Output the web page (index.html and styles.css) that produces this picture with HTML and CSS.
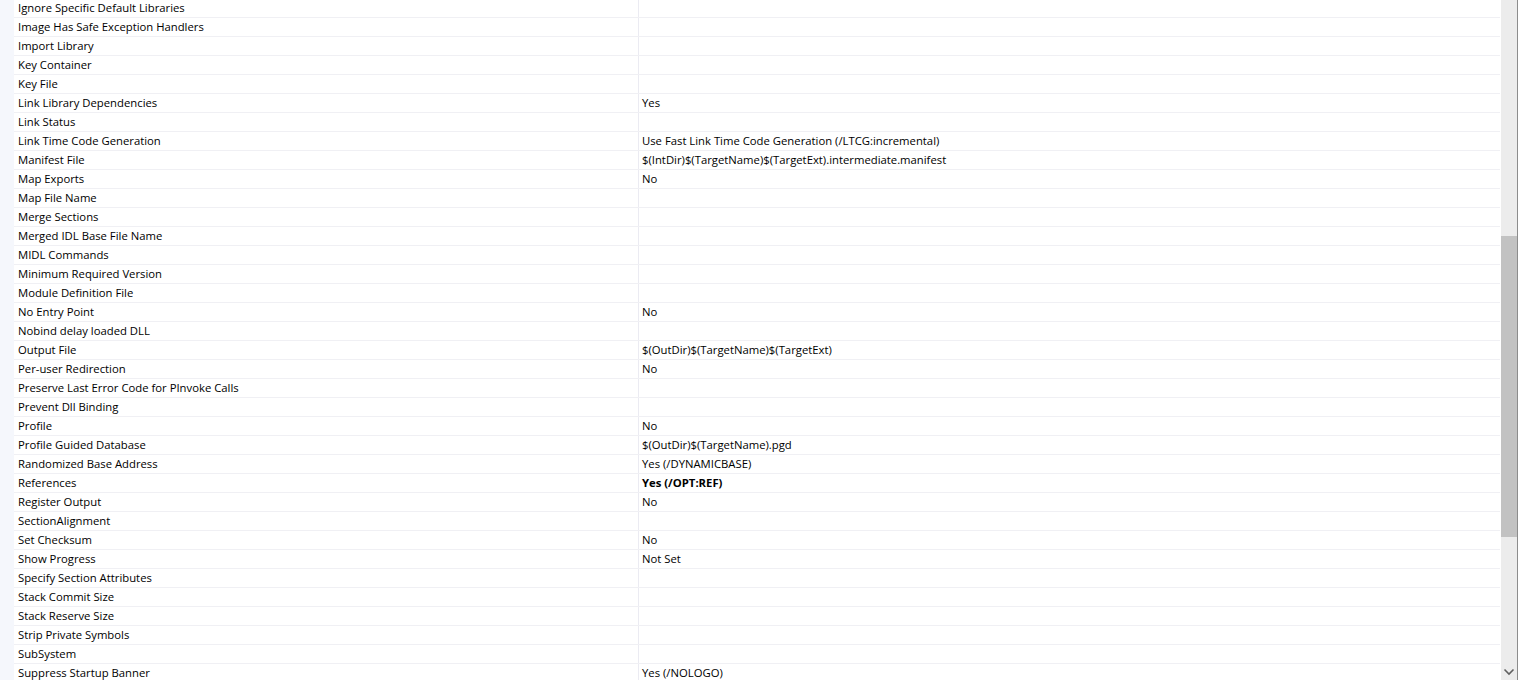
FILE: index.html
```html
<!DOCTYPE html>
<html>
<head>
<meta charset="utf-8">
<link rel="stylesheet" href="styles.css">
</head>
<body>
<div class="window">
  <div class="gutter"></div>
  <div class="table">
    <div class="rows">
      <div class="row"><div class="name">Ignore Specific Default Libraries</div><div class="value"></div></div>
      <div class="row"><div class="name">Image Has Safe Exception Handlers</div><div class="value"></div></div>
      <div class="row"><div class="name">Import Library</div><div class="value"></div></div>
      <div class="row"><div class="name">Key Container</div><div class="value"></div></div>
      <div class="row"><div class="name">Key File</div><div class="value"></div></div>
      <div class="row"><div class="name">Link Library Dependencies</div><div class="value">Yes</div></div>
      <div class="row"><div class="name">Link Status</div><div class="value"></div></div>
      <div class="row"><div class="name">Link Time Code Generation</div><div class="value">Use Fast Link Time Code Generation (/LTCG:incremental)</div></div>
      <div class="row"><div class="name">Manifest File</div><div class="value">$(IntDir)$(TargetName)$(TargetExt).intermediate.manifest</div></div>
      <div class="row"><div class="name">Map Exports</div><div class="value">No</div></div>
      <div class="row"><div class="name">Map File Name</div><div class="value"></div></div>
      <div class="row"><div class="name">Merge Sections</div><div class="value"></div></div>
      <div class="row"><div class="name">Merged IDL Base File Name</div><div class="value"></div></div>
      <div class="row"><div class="name">MIDL Commands</div><div class="value"></div></div>
      <div class="row"><div class="name">Minimum Required Version</div><div class="value"></div></div>
      <div class="row"><div class="name">Module Definition File</div><div class="value"></div></div>
      <div class="row"><div class="name">No Entry Point</div><div class="value">No</div></div>
      <div class="row"><div class="name">Nobind delay loaded DLL</div><div class="value"></div></div>
      <div class="row"><div class="name">Output File</div><div class="value">$(OutDir)$(TargetName)$(TargetExt)</div></div>
      <div class="row"><div class="name">Per-user Redirection</div><div class="value">No</div></div>
      <div class="row"><div class="name">Preserve Last Error Code for PInvoke Calls</div><div class="value"></div></div>
      <div class="row"><div class="name">Prevent Dll Binding</div><div class="value"></div></div>
      <div class="row"><div class="name">Profile</div><div class="value">No</div></div>
      <div class="row"><div class="name">Profile Guided Database</div><div class="value">$(OutDir)$(TargetName).pgd</div></div>
      <div class="row"><div class="name">Randomized Base Address</div><div class="value">Yes (/DYNAMICBASE)</div></div>
      <div class="row"><div class="name">References</div><div class="value bold">Yes (/OPT:REF)</div></div>
      <div class="row"><div class="name">Register Output</div><div class="value">No</div></div>
      <div class="row"><div class="name">SectionAlignment</div><div class="value"></div></div>
      <div class="row"><div class="name">Set Checksum</div><div class="value">No</div></div>
      <div class="row"><div class="name">Show Progress</div><div class="value">Not Set</div></div>
      <div class="row"><div class="name">Specify Section Attributes</div><div class="value"></div></div>
      <div class="row"><div class="name">Stack Commit Size</div><div class="value"></div></div>
      <div class="row"><div class="name">Stack Reserve Size</div><div class="value"></div></div>
      <div class="row"><div class="name">Strip Private Symbols</div><div class="value"></div></div>
      <div class="row"><div class="name">SubSystem</div><div class="value"></div></div>
      <div class="row"><div class="name">Suppress Startup Banner</div><div class="value">Yes (/NOLOGO)</div></div>
    </div>
  </div>
  <div class="scrollbar">
    <div class="track"><div class="thumb"></div></div>
    <div class="arrow">
      <svg width="16" height="12" viewBox="0 0 16 12"><path d="M3.5 3.5 L8 8 L12.5 3.5" fill="none" stroke="#606060" stroke-width="1.6"/></svg>
    </div>
  </div>
  <div class="edge"></div>
</div>
</body>
</html>
```

FILE: styles.css
```css
html, body {
  margin: 0;
  padding: 0;
  background: #ffffff;
}
.window {
  display: flex;
  width: 1518px;
  height: 680px;
  overflow: hidden;
  font-family: "Open Sans", "Noto Sans", sans-serif;
  font-size: 11.3px;
  color: #000000;
}
.gutter {
  width: 14px;
  flex: none;
  background: #f5f7fc;
}
.table {
  width: 1486px;
  flex: none;
  margin-right: 1px;
  overflow: hidden;
}
.rows {
  margin-top: -1px;
}
.row {
  display: grid;
  grid-template-columns: 625px 1fr;
  height: 19px;
  box-sizing: border-box;
  border-bottom: 1px solid #f0f0f4;
}
.name {
  box-sizing: border-box;
  border-right: 1px solid #ebebf2;
  padding-left: 4px;
  line-height: 18px;
  white-space: nowrap;
}
.value {
  padding-left: 3px;
  line-height: 18px;
  white-space: nowrap;
}
.bold {
  font-weight: bold;
}
.scrollbar {
  width: 16px;
  flex: none;
  display: flex;
  flex-direction: column;
  background: #ececec;
}
.track {
  flex: 1;
  padding-top: 236px;
}
.thumb {
  height: 301px;
  background: #c2c2c2;
}
.arrow {
  height: 17px;
  display: flex;
  align-items: center;
  justify-content: center;
}
.edge {
  width: 1px;
  flex: none;
  background: #8c8c8c;
}
```
